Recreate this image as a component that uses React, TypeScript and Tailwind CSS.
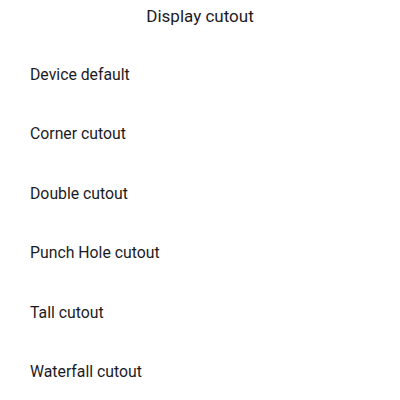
export default function App() {
  const items = [
    "Device default",
    "Corner cutout",
    "Double cutout",
    "Punch Hole cutout",
    "Tall cutout",
    "Waterfall cutout",
  ];
  return (
    <div
      className="w-[400px] h-[400px] bg-white text-[#1b1b1f] overflow-hidden pt-[1px]"
      style={{ fontFamily: 'Roboto, sans-serif' }}
    >
      <div className="h-[32px] flex items-center justify-center text-[17px]">
        Display cutout
      </div>
      <div className="pt-[12px] flex flex-col">
        {items.map((t) => (
          <div key={t} className="h-[59.5px] flex items-center pl-[30px] text-[15.8px]">
            {t}
          </div>
        ))}
      </div>
    </div>
  );
}
